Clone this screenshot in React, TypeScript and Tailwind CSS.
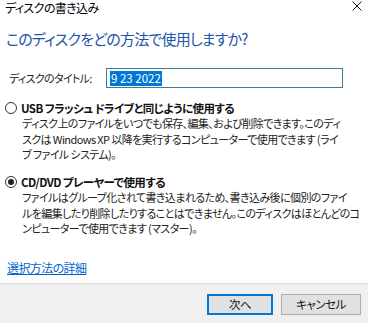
import React from "react";

const font = "font-['Noto_Sans_CJK_JP',sans-serif] [font-feature-settings:'palt']";

function Radio({ checked }: { checked?: boolean }) {
  return (
    <span className="flex h-[12px] w-[12px] shrink-0 items-center justify-center rounded-full border border-[#333] bg-white">
      {checked && <span className="h-[6px] w-[6px] rounded-full bg-[#222]" />}
    </span>
  );
}

function Option({
  checked,
  label,
  lines,
}: {
  checked?: boolean;
  label: string;
  lines: string[];
}) {
  return (
    <div className="flex flex-col">
      <div className="flex h-[16px] items-center gap-[4px] pl-[5px]">
        <Radio checked={checked} />
        <span className="whitespace-nowrap text-[11.5px] font-bold leading-[16px] tracking-[-0.6px] text-[#111]">
          {label}
        </span>
      </div>
      <div className="pl-[22px] text-[11px] leading-[15.5px] tracking-[-0.6px] text-[#222]">
        {lines.map((l) => (
          <div key={l} className="whitespace-nowrap">
            {l}
          </div>
        ))}
      </div>
    </div>
  );
}

export default function App() {
  return (
    <div className={`flex h-[323px] w-[368px] flex-col overflow-hidden bg-white ${font}`}>
      {/* タイトルバー */}
      <div className="flex h-[16px] items-center justify-between pl-[5px] pr-[5px]">
        <span className="whitespace-nowrap text-[12px] leading-[16px] tracking-[-0.6px] text-black">
          ディスクの書き込み
        </span>
        <svg width="10" height="10" viewBox="0 0 10 10" className="mb-[5px] mr-[1px]">
          <path d="M0.5 0.5 L9.5 9.5 M9.5 0.5 L0.5 9.5" stroke="#111" strokeWidth="1" />
        </svg>
      </div>

      <div className="mt-[13px] whitespace-nowrap pl-[6px] text-[15px] leading-[20px] tracking-[-0.8px] text-[#1c55a5]">
        このディスクをどの方法で使用しますか?
      </div>

      {/* ディスクのタイトル */}
      <div className="mt-[19px] flex h-[20px] items-center">
        <span className="w-[106px] whitespace-nowrap pl-[9px] text-[11px] tracking-[-0.7px] text-[#222]">
          ディスクのタイトル:
        </span>
        <div className="flex h-[20px] w-[237px] items-center border border-[#3d7f92] bg-white pl-[3px]">
          <span className="bg-[#0078d7] px-[1px] text-[11.5px] leading-[15px] text-white">9 23 2022</span>
        </div>
      </div>

      <div className="mt-[12px] flex flex-col gap-[11.5px]">
        <Option
          label="USB フラッシュ ドライブと同じように使用する"
          lines={[
            "ディスク上のファイルをいつでも保存、編集、および削除できます。このディ",
            "スクは Windows XP 以降を実行するコンピューターで使用できます (ライ",
            "ブ ファイル システム)。",
          ]}
        />
        <Option
          checked
          label="CD/DVD プレーヤーで使用する"
          lines={[
            "ファイルはグループ化されて書き込まれるため、書き込み後に個別のファイ",
            "ルを編集したり削除したりすることはできません。このディスクはほとんどのコ",
            "ンピューターで使用できます (マスター)。",
          ]}
        />
      </div>

      <div className="mt-[17px] pl-[7px]">
        <span className="text-[12px] leading-[16px] tracking-[-0.6px] text-[#0066cc] underline">
          選択方法の詳細
        </span>
      </div>

      <div className="flex-1" />

      {/* フッター */}
      <div className="flex h-[40px] items-start justify-end gap-[8px] border-t border-[#e0e0e0] bg-[#f0f0f0] pr-[7px] pt-[10px]">
        <button className="flex h-[21px] w-[66px] items-center justify-center border-2 border-[#0078d7] bg-[#e1e1e1] text-[11.5px] tracking-[-0.5px] text-[#111]">
          次へ
        </button>
        <button className="flex h-[21px] w-[80px] items-center justify-center border border-[#adadad] bg-[#e1e1e1] text-[11.5px] tracking-[-0.5px] text-[#111]">
          キャンセル
        </button>
      </div>
    </div>
  );
}
